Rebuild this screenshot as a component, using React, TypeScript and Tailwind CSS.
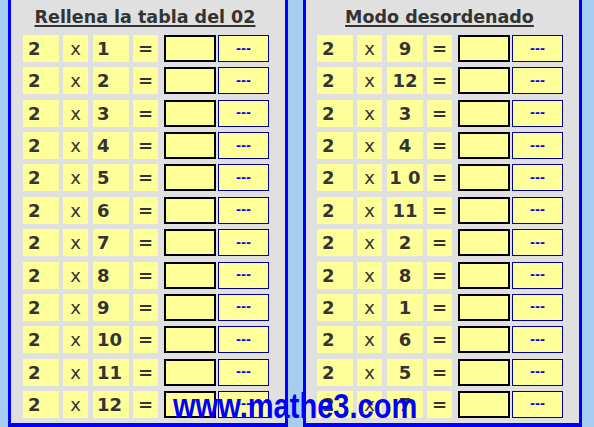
// Two "tabla del 2" practice panels side by side, with the site watermark on top

const LEFT_ROWS = ['1', '2', '3', '4', '5', '6', '7', '8', '9', '10', '11', '12']
const RIGHT_ROWS = ['9', '12', '3', '4', '1 0', '11', '2', '8', '1', '6', '5', '7']

const cell = 'flex h-[27px] items-center bg-[#ffff99] text-[18px] text-[#333333]'

function Row({ value, centered }: { value: string; centered: boolean }) {
  return (
    <div className="flex gap-[4px]">
      <div className={`${cell} w-[36px] pl-[5px] font-bold`}>2</div>
      <div className={`${cell} w-[25px] justify-center`}>x</div>
      <div className={`${cell} ml-[1px] w-[36px] font-bold whitespace-pre ${centered ? 'justify-center' : 'pl-[4px]'}`}>
        {value}
      </div>
      <div className={`${cell} w-[25px] justify-center font-bold`}>=</div>
      <div className="ml-[2px] flex gap-[2px]">
        <div className="h-[27px] w-[52px] border-2 border-black bg-[#ffff99]" />
        <div className="flex h-[27px] w-[51px] items-center justify-center border border-[#000090] bg-[#ffff99] text-[12px] font-bold text-[#0000ff]">
          ---
        </div>
      </div>
    </div>
  )
}

function Panel({
  title,
  rows,
  centered,
  width,
  padLeft,
}: {
  title: string
  rows: string[]
  centered: boolean
  width: string
  padLeft: string
}) {
  return (
    <div className={`${width} h-[427px] shrink-0 border-x-[3px] border-b-[4px] border-[#0000ff] bg-[#e0e0e0]`}>
      <div className="pt-[5px] pr-[6px] text-center text-[17.5px] leading-[24px] font-bold text-[#333333] underline decoration-[1.5px] underline-offset-[2px]">
        {title}
      </div>
      <div className={`mt-[6px] flex flex-col gap-y-[5.36px] ${padLeft}`}>
        {rows.map((r, i) => (
          <Row key={i} value={r} centered={centered} />
        ))}
      </div>
    </div>
  )
}

export default function App() {
  return (
    <div
      className="relative h-[427px] w-[594px] overflow-hidden bg-[#a6cef3]"
      style={{ fontFamily: '"DejaVu Sans", Verdana, sans-serif' }}
    >
      <div className="flex gap-[15px] pl-[8px]">
        <Panel title="Rellena la tabla del 02" rows={LEFT_ROWS} centered={false} width="w-[280px]" padLeft="pl-[12px]" />
        <Panel title="Modo desordenado" rows={RIGHT_ROWS} centered={true} width="w-[279px]" padLeft="pl-[11px]" />
      </div>

      {/* watermark */}
      <div
        className="pointer-events-none absolute top-[388px] left-[173px] origin-left scale-x-[0.83] text-[35px] leading-[35px] font-bold whitespace-nowrap text-[#0000ff]"
        style={{ fontFamily: '"Liberation Sans", Arial, sans-serif' }}
      >
        www.mathe3.com
      </div>
    </div>
  )
}
